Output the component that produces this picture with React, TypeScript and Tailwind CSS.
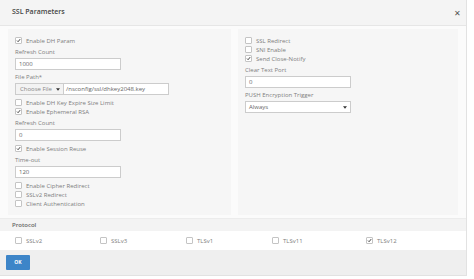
import React from 'react';

const Check = ({ checked, label }: { checked?: boolean; label: string }) => (
  <label className="flex items-center gap-[4px] h-[9px]">
    <span className="w-[7px] h-[7px] border border-[#c4c4c4] bg-white rounded-[1px] flex items-center justify-center shrink-0">
      {checked && (
        <svg viewBox="0 0 10 10" className="w-[7px] h-[7px]">
          <path d="M2 5.2 L4.2 7.4 L8.4 2.2" stroke="#333" strokeWidth="1.8" fill="none" />
        </svg>
      )}
    </span>
    <span className="text-[6px] leading-none text-[#7e7e7e]">{label}</span>
  </label>
);

const Label = ({ children }: { children: React.ReactNode }) => (
  <div className="text-[6px] leading-none text-[#7e7e7e] mt-[4px] mb-[3px]">{children}</div>
);

const Input = ({ value, w = 'w-[106px]' }: { value: string; w?: string }) => (
  <div className={`${w} h-[12px] bg-white border border-[#cccccc] flex items-center px-[3px] text-[6px] text-[#666]`}>
    {value}
  </div>
);

const App: React.FC = () => {
  return (
    <div className="w-[474px] h-[279px] bg-white" style={{ fontFamily: '"Open Sans", "Liberation Sans", sans-serif' }}>
      <div className="w-[467px] h-[276px] border-r border-b border-[#e2e2e2] flex flex-col">
        {/* Header */}
        <div className="h-[26px] bg-[#f4f4f4] border-b border-[#e6e6e6] flex items-center justify-between pl-[12px] pr-[5px]">
          <span className="text-[7px] font-semibold text-[#444]">SSL Parameters</span>
          <span className="text-[8px] text-[#555] leading-none">✕</span>
        </div>

        {/* Panels */}
        <div className="flex gap-[7px] px-[8px] pt-[3px] bg-[#fbfbfb]">
          <div className="w-[225px] h-[186px] bg-[#f6f6f6] pl-[7px] pt-[7px]">
            <Check checked label="Enable DH Param" />
            <Label>Refresh Count</Label>
            <Input value="1000" />
            <Label>File Path*</Label>
            <div className="flex">
              <div className="w-[49px] h-[12px] bg-[#f3f3f3] border border-[#cccccc] flex items-center justify-end gap-[4px] pr-[3px] text-[6px] text-[#888]">
                Choose File
                <svg viewBox="0 0 6 4" className="w-[4px] h-[3px]"><path d="M0 0 L6 0 L3 4 Z" fill="#333" /></svg>
              </div>
              <div className="w-[105px] h-[12px] bg-white border border-l-0 border-[#cccccc] flex items-center px-[2px] text-[6px] text-[#666]">
                /nsconfig/ssl/dhkey2048.key
              </div>
            </div>
            <div className="mt-[3px] flex flex-col">
              <Check label="Enable DH Key Expire Size Limit" />
              <Check checked label="Enable Ephemeral RSA" />
            </div>
            <Label>Refresh Count</Label>
            <Input value="0" />
            <div className="mt-[3px]">
              <Check checked label="Enable Session Reuse" />
            </div>
            <Label>Time-out</Label>
            <Input value="120" />
            <div className="mt-[3px] flex flex-col">
              <Check label="Enable Cipher Redirect" />
              <Check label="SSLv2 Redirect" />
              <Check label="Client Authentication" />
            </div>
          </div>
          <div className="w-[222px] h-[186px] bg-[#f6f6f6] pl-[7px] pt-[7px]">
            <div className="flex flex-col">
              <Check label="SSL Redirect" />
              <Check label="SNI Enable" />
              <Check checked label="Send Close-Notify" />
            </div>
            <Label>Clear Text Port</Label>
            <Input value="0" />
            <Label>PUSH Encryption Trigger</Label>
            <div className="w-[106px] h-[12px] bg-white border border-[#cccccc] flex items-center justify-between px-[3px] text-[6px] text-[#666]">
              Always
              <svg viewBox="0 0 6 4" className="w-[4px] h-[3px]"><path d="M0 0 L6 0 L3 4 Z" fill="#333" /></svg>
            </div>
          </div>
        </div>

        {/* Protocol */}
        <div className="bg-[#fbfbfb] h-[3px]" />
        <div className="bg-[#f3f3f3] h-[13px] flex items-center pl-[12px] border-t border-[#ececec]">
          <span className="text-[6px] font-semibold text-[#666]">Protocol</span>
        </div>
        <div className="bg-white h-[19px] flex items-center pl-[15px]">
          <div className="w-[85px]"><Check label="SSLv2" /></div>
          <div className="w-[86px]"><Check label="SSLv3" /></div>
          <div className="w-[86px]"><Check label="TLSv1" /></div>
          <div className="w-[94px]"><Check label="TLSv11" /></div>
          <div><Check checked label="TLSv12" /></div>
        </div>

        {/* Footer */}
        <div className="flex-1 bg-[#efefef] flex items-center pl-[6px]">
          <button className="w-[24px] h-[15px] bg-[#3d85c8] text-white text-[5px] font-bold flex items-center justify-center rounded-[1px]">
            OK
          </button>
        </div>
      </div>
    </div>
  );
};

export default App;
